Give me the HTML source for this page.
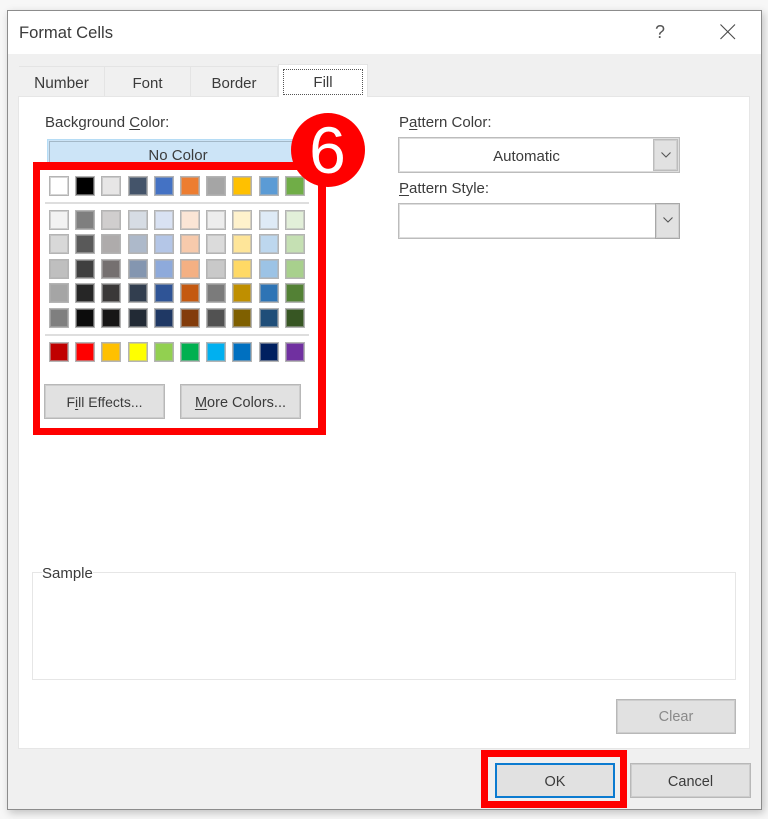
<!DOCTYPE html>
<html>
<head>
<meta charset="utf-8">
<style>
html,body{margin:0;padding:0;width:768px;height:819px;overflow:hidden;background:#f7f7f7}
*{box-sizing:border-box}
body{font-family:"Liberation Sans",sans-serif;font-size:15px;color:#3b3b3b;position:relative}
#w{position:absolute;left:0;top:0;width:768px;height:819px;filter:blur(.35px)}
.a{position:absolute}
.t{position:absolute;white-space:nowrap;line-height:18px}
#dlg{left:7px;top:10px;width:755px;height:800px;background:#f0f0f0;border:1px solid #8c8c8c;box-shadow:2px 3px 8px rgba(0,0,0,.22)}
#title{left:8px;top:11px;width:753px;height:43px;background:#fff}
#panel{left:18px;top:96px;width:732px;height:653px;background:#fff;border:1px solid #e6e6e6}
.tab{position:absolute;top:66px;height:31px;background:#f0f0f0;border:1px solid #e4e4e4;border-bottom:none;border-left:none;text-align:center;line-height:34px}
.btn{position:absolute;background:#e1e1e1;border:1px solid #b8b8b8;box-shadow:inset 0 0 0 1px rgba(185,185,185,.5);text-align:center;line-height:37px;height:35px;font-size:14.5px}
.box{box-shadow:inset 0 0 0 1px rgba(190,190,190,.5);border:1px solid #bcbcbc}
.g{position:absolute;left:49px;display:grid;grid-template-columns:repeat(10,20px);column-gap:6.2px}
.g i{display:block;width:20px;height:20px;border:1px solid #b4b4b4;box-shadow:inset 0 0 0 1px rgba(178,178,178,.55)}
.rows{row-gap:4.4px}
.sep{position:absolute;left:45px;width:264px;height:2px;background:#dedede}
u{text-underline-offset:2px}
</style>
</head>
<body>
<div id="w">
<div class="a" id="dlg"></div>
<div class="a" id="title"></div>
<div class="t" style="left:19px;top:22px;font-size:16.6px;line-height:22px">Format Cells</div>
<div class="t" style="left:655px;top:21px;font-size:18px;line-height:22px;color:#555">?</div>
<svg class="a" style="left:719px;top:23px" width="18" height="18" viewBox="0 0 18 18"><path d="M1.5 1.5L16 16M16 1.5L1.5 16" stroke="#4a4a4a" stroke-width="1.1" fill="none"/></svg>

<div class="tab" style="left:19px;width:86px;font-size:15.4px">Number</div>
<div class="tab" style="left:105px;width:86px">Font</div>
<div class="tab" style="left:191px;width:87px">Border</div>
<div class="a" id="panel"></div>
<div class="tab" style="left:278px;top:64px;width:90px;height:33px;background:#fff;line-height:35px;z-index:2;border:1px solid #e4e4e4;border-bottom:none">
<div class="a" style="left:4px;top:4px;width:80px;height:26px;border:1px dotted #555"></div>Fill</div>

<div class="t" style="left:45px;top:114px">Background <u>C</u>olor:</div>
<div class="a" style="left:47px;top:139px;width:262px;height:40px;background:#cce4f7;border:1px solid #b5dcf5"></div>
<div class="a" style="left:49px;top:141px;width:258px;height:36px;border:1px solid #a3b8c8;background:#cce4f7"></div>
<div class="t" style="left:47px;top:147px;width:262px;text-align:center">No Color</div>

<div class="t" style="left:399px;top:114px">P<u>a</u>ttern Color:</div>
<div class="a box" style="left:398px;top:137px;width:282px;height:36px;background:#fff"></div>
<div class="t" style="left:398px;top:148px;width:257px;text-align:center">Automatic</div>
<div class="a box" style="left:653px;top:139px;width:25px;height:32px;background:#e1e1e1"></div>
<svg class="a" style="left:660px;top:151px" width="12" height="8" viewBox="0 0 12 8"><path d="M1.5 1.5L6 6L10.5 1.5" stroke="#555" stroke-width="1.1" fill="none"/></svg>

<div class="t" style="left:399px;top:180px"><u>P</u>attern Style:</div>
<div class="a box" style="left:398px;top:203px;width:282px;height:36px;background:#fff"></div>
<div class="a box" style="left:655px;top:203px;width:25px;height:36px;background:#e1e1e1;border-color:#a8a8a8"></div>
<svg class="a" style="left:662px;top:216px" width="12" height="8" viewBox="0 0 12 8"><path d="M1.5 1.5L6 6L10.5 1.5" stroke="#555" stroke-width="1.1" fill="none"/></svg>

<!-- red frame with palette -->
<div class="a" style="left:33px;top:162px;width:293px;height:273px;background:#fff;border:solid #f00;border-width:8px 8px 7px 7px"></div>
<div class="g" style="top:176px">
<i style="background:#fff"></i><i style="background:#000"></i><i style="background:#e7e6e6"></i><i style="background:#44546a"></i><i style="background:#4472c4"></i><i style="background:#ed7d31"></i><i style="background:#a5a5a5"></i><i style="background:#ffc000"></i><i style="background:#5b9bd5"></i><i style="background:#70ad47"></i>
</div>
<div class="sep" style="top:202px"></div>
<div class="g rows" style="top:210px">
<i style="background:#f2f2f2"></i><i style="background:#7f7f7f"></i><i style="background:#d0cece"></i><i style="background:#d6dce4"></i><i style="background:#d9e2f3"></i><i style="background:#fbe5d5"></i><i style="background:#ededed"></i><i style="background:#fff2cc"></i><i style="background:#deeaf6"></i><i style="background:#e2efd9"></i>
<i style="background:#d8d8d8"></i><i style="background:#595959"></i><i style="background:#aeabab"></i><i style="background:#adb9ca"></i><i style="background:#b4c6e7"></i><i style="background:#f7caac"></i><i style="background:#dbdbdb"></i><i style="background:#fee599"></i><i style="background:#bdd7ee"></i><i style="background:#c5e0b3"></i>
<i style="background:#bfbfbf"></i><i style="background:#3f3f3f"></i><i style="background:#757070"></i><i style="background:#8496b0"></i><i style="background:#8eaadb"></i><i style="background:#f4b083"></i><i style="background:#c9c9c9"></i><i style="background:#ffd965"></i><i style="background:#9cc3e5"></i><i style="background:#a8d08d"></i>
<i style="background:#a5a5a5"></i><i style="background:#262626"></i><i style="background:#3a3838"></i><i style="background:#323e4f"></i><i style="background:#2f5496"></i><i style="background:#c45911"></i><i style="background:#7b7b7b"></i><i style="background:#bf8f00"></i><i style="background:#2e74b5"></i><i style="background:#538135"></i>
<i style="background:#7f7f7f"></i><i style="background:#0c0c0c"></i><i style="background:#171616"></i><i style="background:#222a35"></i><i style="background:#1f3864"></i><i style="background:#833c0b"></i><i style="background:#525252"></i><i style="background:#7f6000"></i><i style="background:#1f4e79"></i><i style="background:#375623"></i>
</div>
<div class="sep" style="top:334px"></div>
<div class="g" style="top:342px">
<i style="background:#c00000"></i><i style="background:#f00"></i><i style="background:#ffc000"></i><i style="background:#ff0"></i><i style="background:#92d050"></i><i style="background:#00b050"></i><i style="background:#00b0f0"></i><i style="background:#0070c0"></i><i style="background:#002060"></i><i style="background:#7030a0"></i>
</div>
<div class="btn" style="left:44px;top:384px;width:121px;font-size:14px;line-height:35px">F<u>i</u>ll Effects...</div>
<div class="btn" style="left:180px;top:384px;width:121px;line-height:36px"><u>M</u>ore Colors...</div>

<!-- badge -->
<div class="a" style="left:290.5px;top:113px;width:74px;height:74px;border-radius:50%;background:#f00"></div>
<div class="t" style="left:290.5px;top:113px;width:74px;height:74px;line-height:74px;text-align:center;color:#fff;font-size:66px">6</div>

<!-- sample -->
<div class="a" style="left:32px;top:572px;width:704px;height:108px;border:1px solid #e6e6e6"></div>
<div class="t" style="left:42px;top:565px;background:#fff">Sample</div>

<div class="btn" style="left:616px;top:699px;width:120px;color:#8a8a8a;line-height:35px">Clear</div>

<!-- ok -->
<div class="a" style="left:481px;top:750px;width:146px;height:58px;border:7px solid #f00"></div>
<div class="btn" style="left:495px;top:763px;width:120px;border:2px solid #0c7bd0;box-shadow:none;line-height:35px">OK</div>
<div class="btn" style="left:630px;top:763px;width:121px;line-height:36px">Cancel</div>
</div>
</body>
</html>
